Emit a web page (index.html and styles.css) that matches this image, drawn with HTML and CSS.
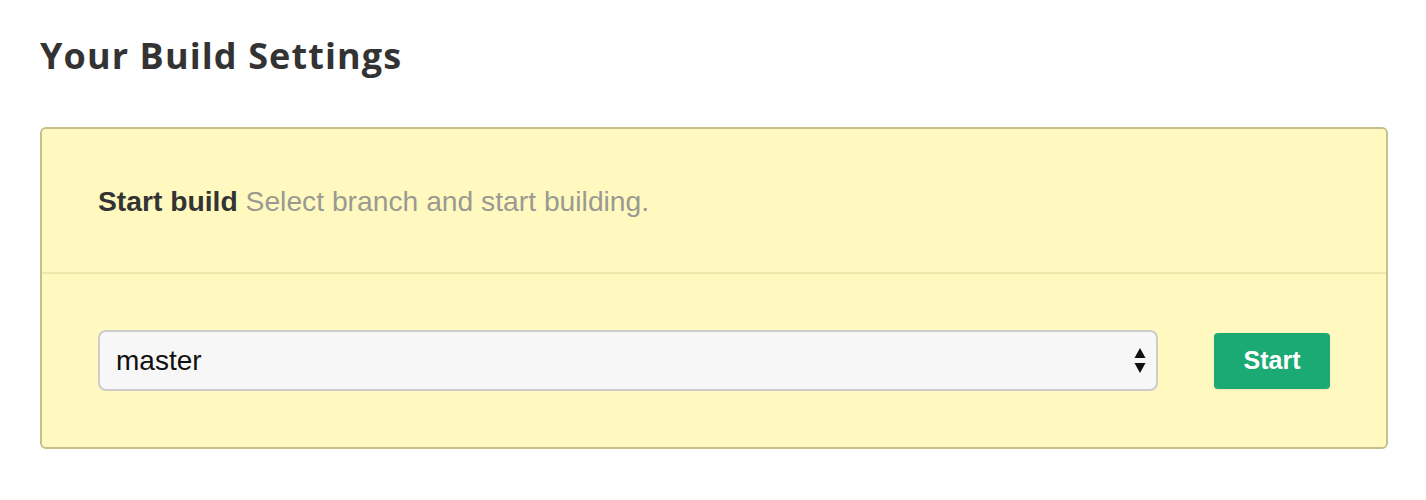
FILE: index.html
```html
<!DOCTYPE html>
<html>
<head>
<meta charset="utf-8">
<link rel="stylesheet" href="styles.css">
</head>
<body>
<div class="page">
  <h1 class="title">Your Build Settings</h1>
  <div class="panel">
    <div class="panel-head">
      <span class="head-strong">Start build</span> <span class="head-muted">Select branch and start building.</span>
    </div>
    <div class="panel-body">
      <div class="select">
        <span class="select-value">master</span>
        <svg class="select-arrows" width="12" height="26" viewBox="0 0 12 26">
          <path d="M6 0 L11.5 10 L0.5 10 Z" fill="#111"/>
          <path d="M0.5 15 L11.5 15 L6 25 Z" fill="#111"/>
        </svg>
      </div>
      <button class="btn-start">Start</button>
    </div>
  </div>
</div>
</body>
</html>
```
FILE: styles.css
```css
html, body {
  margin: 0;
  padding: 0;
  background: #ffffff;
}
.page {
  padding: 34px 38px 0 40px;
}
.title {
  margin: 0 0 49px 0;
  font-family: "Open Sans", "Liberation Sans", sans-serif;
  font-weight: 700;
  font-size: 36px;
  line-height: 44px;
  letter-spacing: 1.1px;
  color: #333333;
}
.panel {
  background: #fff9c0;
  border: 2px solid #c6c08a;
  border-radius: 6px;
}
.panel-head {
  padding: 56px 56px 55px 56px;
  font-family: "Liberation Sans", Arial, sans-serif;
  font-size: 28.25px;
  line-height: 32px;
  border-bottom: 2px solid #efe8aa;
}
.head-strong {
  font-weight: 700;
  color: #333333;
}
.head-muted {
  color: #9a9a92;
}
.panel-body {
  display: flex;
  align-items: center;
  gap: 56px;
  padding: 56px 56px 56px 56px;
}
.select {
  box-sizing: border-box;
  flex: 1;
  height: 61px;
  display: flex;
  align-items: center;
  justify-content: space-between;
  padding: 0 10px 0 16px;
  background: #f7f7f7;
  border: 2px solid #cccccc;
  border-radius: 8px;
}
.select-value {
  font-family: "Liberation Sans", Arial, sans-serif;
  font-size: 28px;
  color: #111111;
}
.btn-start {
  width: 116px;
  height: 56px;
  border: none;
  border-radius: 4px;
  background: #1ba974;
  color: #ffffff;
  font-family: "Liberation Sans", Arial, sans-serif;
  font-weight: 700;
  font-size: 25px;
  box-shadow: 0 1px 2px rgba(0,0,0,0.08);
  padding: 0;
}
```
